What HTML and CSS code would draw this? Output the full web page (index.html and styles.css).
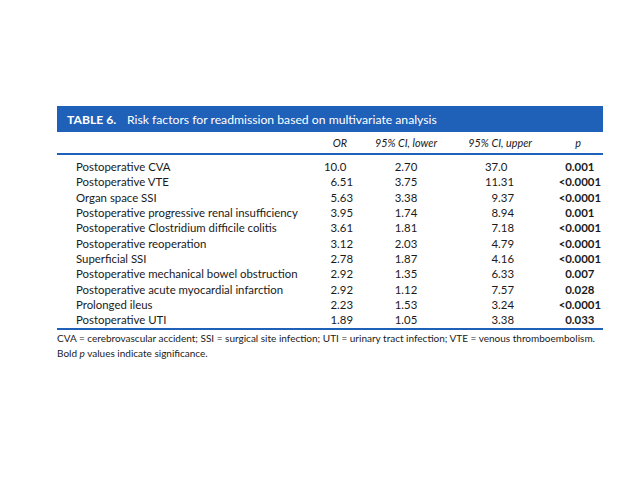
FILE: index.html
```html
<!DOCTYPE html>
<html>
<head>
<meta charset="utf-8">
<link rel="stylesheet" href="styles.css">
</head>
<body>
<div class="wrap">
  <div class="title"><span class="tnum">TABLE 6.</span><span class="ttext">Risk factors for readmission based on multivariate analysis</span></div>
  <div class="grid head">
    <div></div>
    <div class="h h-or">OR</div>
    <div class="h h-lo">95% CI, lower</div>
    <div class="h h-up">95% CI, upper</div>
    <div class="h h-p">p</div>
  </div>
  <div class="grid body">
    <div class="lab">Postoperative CVA</div><div class="or">10.0<span class="pad">0</span></div><div class="lo">2.70</div><div class="up">37.0<span class="pad">0</span></div><div class="p">0.001<span class="pad">0</span></div>
    <div class="lab">Postoperative VTE</div><div class="or">6.51</div><div class="lo">3.75</div><div class="up">11.31</div><div class="p">&lt;0.0001</div>
    <div class="lab">Organ space SSI</div><div class="or">5.63</div><div class="lo">3.38</div><div class="up">9.37</div><div class="p">&lt;0.0001</div>
    <div class="lab">Postoperative progressive renal insufficiency</div><div class="or">3.95</div><div class="lo">1.74</div><div class="up">8.94</div><div class="p">0.001<span class="pad">0</span></div>
    <div class="lab">Postoperative Clostridium difficile colitis</div><div class="or">3.61</div><div class="lo">1.81</div><div class="up">7.18</div><div class="p">&lt;0.0001</div>
    <div class="lab">Postoperative reoperation</div><div class="or">3.12</div><div class="lo">2.03</div><div class="up">4.79</div><div class="p">&lt;0.0001</div>
    <div class="lab">Superficial SSI</div><div class="or">2.78</div><div class="lo">1.87</div><div class="up">4.16</div><div class="p">&lt;0.0001</div>
    <div class="lab">Postoperative mechanical bowel obstruction</div><div class="or">2.92</div><div class="lo">1.35</div><div class="up">6.33</div><div class="p">0.007<span class="pad">0</span></div>
    <div class="lab">Postoperative acute myocardial infarction</div><div class="or">2.92</div><div class="lo">1.12</div><div class="up">7.57</div><div class="p">0.028<span class="pad">0</span></div>
    <div class="lab">Prolonged ileus</div><div class="or">2.23</div><div class="lo">1.53</div><div class="up">3.24</div><div class="p">&lt;0.0001</div>
    <div class="lab">Postoperative UTI</div><div class="or">1.89</div><div class="lo">1.05</div><div class="up">3.38</div><div class="p">0.033<span class="pad">0</span></div>
  </div>
  <div class="note">CVA = cerebrovascular accident; SSI = surgical site infection; UTI = urinary tract infection; VTE = venous thromboembolism.<br>Bold <i>p</i> values indicate significance.</div>
</div>
</body>
</html>
```
FILE: styles.css
```css
html, body {
  margin: 0;
  padding: 0;
  background: #ffffff;
}
body {
  font-family: Lato, "Open Sans", sans-serif;
  color: #1a1a1a;
}
.wrap {
  width: 546px;
  margin: 106px 0 0 57px;
}
.title {
  background: #1f60b8;
  color: #ffffff;
  height: 26px;
  display: flex;
  align-items: center;
  padding-left: 10px;
  font-size: 12.2px;
}
.tnum {
  font-weight: 700;
  width: 60px;
}
.grid {
  display: grid;
  grid-template-columns: 234px 43px 106px 73px 69px;
  padding-left: 19px;
  padding-right: 2px;
  font-size: 11.4px;
}
.head {
  height: 21px;
  align-items: center;
  border-bottom: 2px solid #1f60b8;
}
.h {
  font-style: italic;
  font-size: 10.8px;
}
.h-or { text-align: right; padding-right: 6px; }
.h-lo { text-align: center; }
.h-up { text-align: right; }
.h-p { text-align: right; padding-right: 20px; }
.body {
  grid-auto-rows: 15.3px;
  align-items: center;
  padding-top: 4px;
  padding-bottom: 1px;
  border-bottom: 2px solid #1f60b8;
}
.or { text-align: right; }
.lo { text-align: center; }
.up { text-align: right; padding-right: 18px; }
.p { text-align: right; font-weight: 700; }
.pad { visibility: hidden; }
.note {
  font-size: 10px;
  line-height: 15px;
  padding-top: 1px;
}
```
